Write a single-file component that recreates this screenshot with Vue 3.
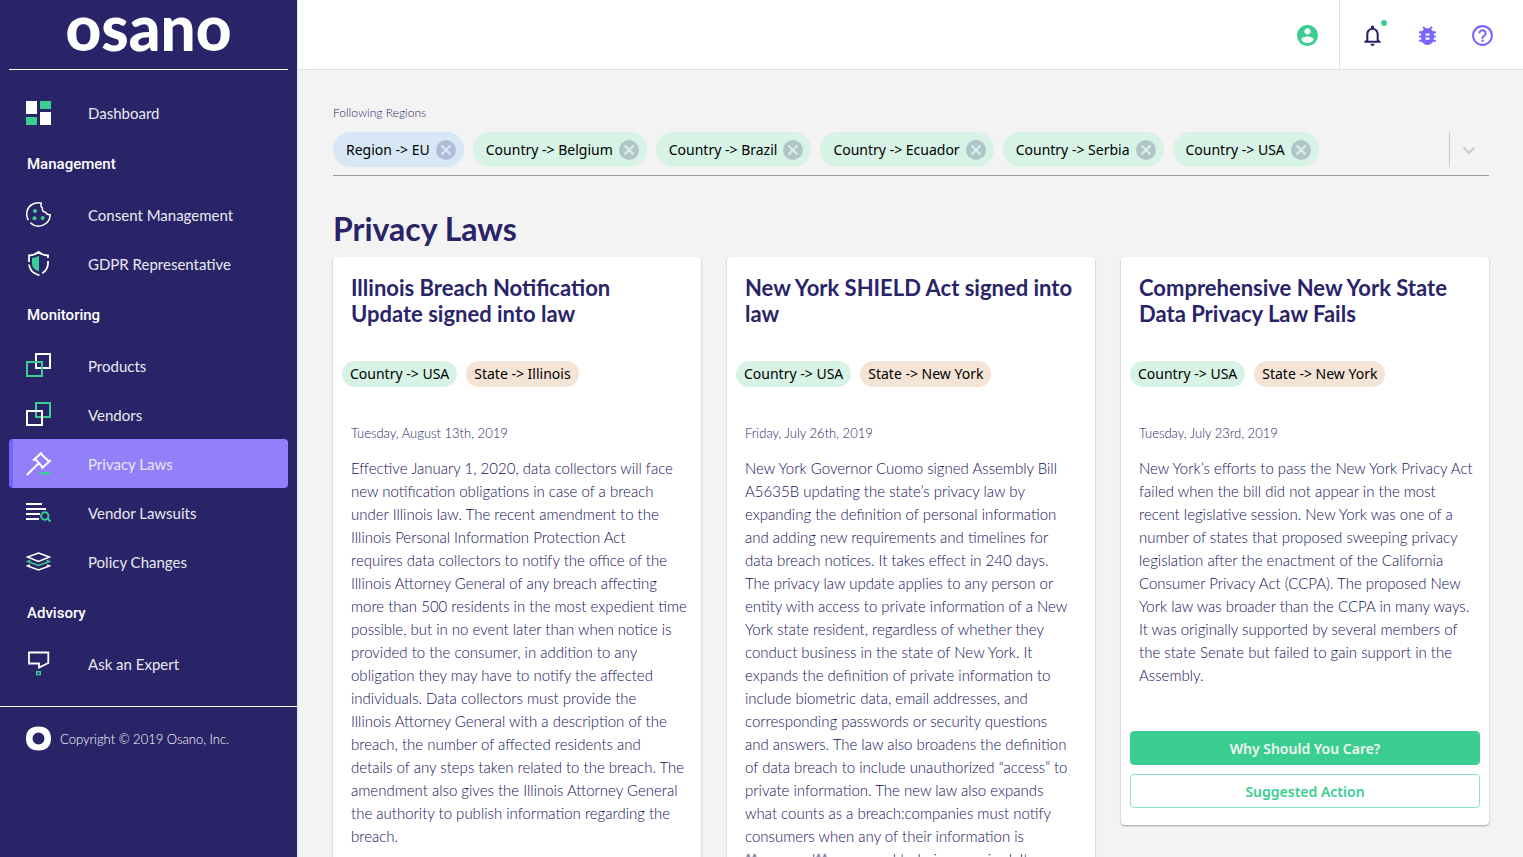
<script setup>
import { ref } from 'vue'

const groups = [
  { title: '', items: [{ label: 'Dashboard', icon: 'dashboard' }] },
  {
    title: 'Management',
    items: [
      { label: 'Consent Management', icon: 'cookie' },
      { label: 'GDPR Representative', icon: 'shield' },
    ],
  },
  {
    title: 'Monitoring',
    items: [
      { label: 'Products', icon: 'products' },
      { label: 'Vendors', icon: 'vendors' },
      { label: 'Privacy Laws', icon: 'gavel', active: true },
      { label: 'Vendor Lawsuits', icon: 'lawsuits' },
      { label: 'Policy Changes', icon: 'layers' },
    ],
  },
  { title: 'Advisory', items: [{ label: 'Ask an Expert', icon: 'ask' }] },
]

const regions = ref([
  { name: 'Region -> EU', tone: 'blue' },
  { name: 'Country -> Belgium', tone: 'green' },
  { name: 'Country -> Brazil', tone: 'green' },
  { name: 'Country -> Ecuador', tone: 'green' },
  { name: 'Country -> Serbia', tone: 'green' },
  { name: 'Country -> USA', tone: 'green' },
])

function removeRegion(index) {
  regions.value.splice(index, 1)
}

const laws = [
  {
    title: 'Illinois Breach Notification\nUpdate signed into law',
    tags: [
      { name: 'Country -> USA', tone: 'green' },
      { name: 'State -> Illinois', tone: 'orange' },
    ],
    date: 'Tuesday, August 13th, 2019',
    text: `Effective January 1, 2020, data collectors will face
new notification obligations in case of a breach
under Illinois law. The recent amendment to the
Illinois Personal Information Protection Act
requires data collectors to notify the office of the
Illinois Attorney General of any breach affecting
more than 500 residents in the most expedient time
possible, but in no event later than when notice is
provided to the consumer, in addition to any
obligation they may have to notify the affected
individuals. Data collectors must provide the
Illinois Attorney General with a description of the
breach, the number of affected residents and
details of any steps taken related to the breach. The
amendment also gives the Illinois Attorney General
the authority to publish information regarding the
breach.`,
  },
  {
    title: 'New York SHIELD Act signed into\nlaw',
    tags: [
      { name: 'Country -> USA', tone: 'green' },
      { name: 'State -> New York', tone: 'orange' },
    ],
    date: 'Friday, July 26th, 2019',
    text: `New York Governor Cuomo signed Assembly Bill
A5635B updating the state’s privacy law by
expanding the definition of personal information
and adding new requirements and timelines for
data breach notices. It takes effect in 240 days.
The privacy law update applies to any person or
entity with access to private information of a New
York state resident, regardless of whether they
conduct business in the state of New York. It
expands the definition of private information to
include biometric data, email addresses, and
corresponding passwords or security questions
and answers. The law also broadens the definition
of data breach to include unauthorized “access” to
private information. The new law also expands
what counts as a breach:companies must notify
consumers when any of their information is
**accessed** compared to being acquired. It`,
  },
  {
    title: 'Comprehensive New York State\nData Privacy Law Fails',
    tags: [
      { name: 'Country -> USA', tone: 'green' },
      { name: 'State -> New York', tone: 'orange' },
    ],
    date: 'Tuesday, July 23rd, 2019',
    text: `New York’s efforts to pass the New York Privacy Act
failed when the bill did not appear in the most
recent legislative session. New York was one of a
number of states that proposed sweeping privacy
legislation after the enactment of the California
Consumer Privacy Act (CCPA). The proposed New
York law was broader than the CCPA in many ways.
It was originally supported by several members of
the state Senate but failed to gain support in the
Assembly.`,
  },
]
</script>

<template>
  <div class="app">
    <aside class="sidebar">
      <a class="logo" href="#">osano</a>
      <nav class="nav">
        <section v-for="group in groups" :key="group.title">
          <h2 v-if="group.title" class="nav-title">{{ group.title }}</h2>
          <a
            v-for="item in group.items"
            :key="item.label"
            href="#"
            class="nav-item"
            :class="{ active: item.active }"
          >
            <svg class="nav-icon" viewBox="0 0 25 25" fill="none" aria-hidden="true">
              <g v-if="item.icon === 'dashboard'">
                <path fill="#fff" d="M0 1h11v13H0zM14 12h11v13H14z" />
                <path fill="#3acf91" d="M14 1h11v8H14zM0 17h11v8H0z" />
              </g>
              <g v-else-if="item.icon === 'cookie'">
                <path
                  stroke="#fff"
                  stroke-width="1.5"
                  d="M2.3 18.2C-.8 12.500 .8 5.500 6 2.500C8.800 .8 12.500 .5 15.300 1.300C14.500 3.500 15 5 16.500 6C16 8.500 17 10 19.500 10.200C20.500 12.200 22.300 13 24.200 12.800C24 17.500 21 21.800 16.500 23.400C12 24.900 7.500 23.800 4.400 20.800"
                />
                <g fill="#3acf91">
                  <circle cx="9" cy="9" r="2" /><circle cx="8.500" cy="16.200" r="2" />
                  <circle cx="16.700" cy="16" r="2" />
                </g>
              </g>
              <g v-else-if="item.icon === 'shield'">
                <path
                  stroke="#fff"
                  stroke-width="1.8"
                  d="M3 11V4.500C7 4.500 10 3 12.500 1C15 3 18 4.500 22 4.500V7M22 10V12C22 16.500 20 20 16.200 22.200M3 13.500C3.500 18.500 7 22.500 13.500 24.300"
                />
                <path fill="#3acf91" d="M13 4.500V20.500C8.500 19 6 16 6 12.500V7C8.500 6.800 11 6 13 4.500Z" />
              </g>
              <g v-else-if="item.icon === 'products' || item.icon === 'vendors'" stroke-width="2">
                <path :stroke="item.icon === 'products' ? '#fff' : '#3acf91'" d="M10 1H24V15H10z" />
                <path :stroke="item.icon === 'products' ? '#3acf91' : '#fff'" d="M1 9H16V23H1z" />
              </g>
              <g v-else-if="item.icon === 'gavel'" stroke="#fff" stroke-width="2">
                <path d="M.8 24L12.500 12.500M7 9.500L16 1.500M15.500 17.500L25 9" />
                <path d="M9 8L17 16.500M14 2L23.500 11" />
                <path stroke="none" fill="#3acf91" d="M14 21h10v2.500H14z" />
              </g>
              <g v-else-if="item.icon === 'lawsuits'">
                <path stroke="#fff" stroke-width="2" d="M0 4H16M0 9H20M0 14H14M0 19H13" />
                <circle cx="18.800" cy="16" r="3.700" stroke="#3acf91" stroke-width="2" />
                <path stroke="#3acf91" stroke-width="2" d="M21.500 18.500L24.500 21.500" />
              </g>
              <g v-else-if="item.icon === 'layers'" stroke-width="1.500">
                <path stroke="#fff" d="M12.500 4L23.500 8L12.500 12.500L1.500 8zM4 16L1.500 17L12.500 21L23.500 17L21 16" />
                <path stroke="#3acf91" d="M4.500 11.500L1.500 12.500L12.500 16.500L23.500 12.500L20.500 11.500" />
              </g>
              <g v-else>
                <path stroke="#fff" stroke-width="1.800" d="M3 1.500H22.300V12L13 16.500V12.500H3z" />
                <path stroke="#3acf91" stroke-width="1.400" d="M10.700 20.700H14.300V23.600H10.700z" />
              </g>
            </svg>
            <span>{{ item.label }}</span>
          </a>
        </section>
      </nav>
      <footer class="legal">
        <svg class="legal-mark" viewBox="0 0 25 25" aria-hidden="true">
          <path
            fill="#fff"
            fill-rule="evenodd"
            d="M12.500 .5C20.500 .5 25 4.500 25 12.500S20.500 24.500 12.500 24.500S0 20.500 0 12.500S4.500 .5 12.500 .5ZM12.500 6.500A6 6 0 1 0 12.500 18.500A6 6 0 1 0 12.500 6.500Z"
          />
        </svg>
        <span>Copyright © 2019 Osano, Inc.</span>
      </footer>
    </aside>

    <div class="page">
      <header class="topbar">
        <button class="icon-button account" type="button" aria-label="Account">
          <svg viewBox="0 0 24 24"><path fill="#3acf91" d="M12 2C6.480 2 2 6.480 2 12s4.480 10 10 10 10-4.480 10-10S17.520 2 12 2zm0 3c1.660 0 3 1.340 3 3s-1.340 3-3 3-3-1.340-3-3 1.340-3 3-3zm0 14.200c-2.500 0-4.710-1.280-6-3.220.03-1.990 4-3.080 6-3.080 1.990 0 5.970 1.090 6 3.080-1.290 1.940-3.500 3.220-6 3.220z" /></svg>
        </button>
        <div class="tools">
          <button class="icon-button" type="button" aria-label="Notifications">
            <svg viewBox="0 0 24 24"><path fill="#292468" d="M12 22c1.100 0 2-.9 2-2h-4c0 1.100.9 2 2 2zm6-6v-5c0-3.070-1.630-5.640-4.500-6.320V4c0-.83-.67-1.500-1.500-1.500s-1.500.67-1.500 1.500v.68C7.640 5.360 6 7.920 6 11v5l-2 2v1h16v-1l-2-2zm-2 1H8v-6c0-2.480 1.510-4.500 4-4.500s4 2.020 4 4.500v6z" /></svg>
            <span class="dot"></span>
          </button>
          <button class="icon-button" type="button" aria-label="Report a bug">
            <svg viewBox="0 0 24 24"><path fill="#7764fa" d="M20 8h-2.810c-.45-.78-1.070-1.450-1.820-1.960L17 4.410 15.590 3l-2.170 2.170C12.960 5.060 12.490 5 12 5c-.49 0-.96.06-1.410.17L8.410 3 7 4.410l1.620 1.630C7.880 6.550 7.260 7.220 6.810 8H4v2h2.090c-.05.33-.09.66-.09 1v1H4v2h2v1c0 .34.04.67.09 1H4v2h2.810c1.040 1.790 2.970 3 5.190 3s4.150-1.210 5.190-3H20v-2h-2.090c.05-.33.09-.66.09-1v-1h2v-2h-2v-1c0-.34-.04-.67-.09-1H20V8zm-6 8h-4v-2h4v2zm0-4h-4v-2h4v2z" /></svg>
          </button>
          <button class="icon-button" type="button" aria-label="Help">
            <svg viewBox="0 0 24 24"><path fill="#7764fa" d="M11 18h2v-2h-2v2zm1-16C6.480 2 2 6.480 2 12s4.480 10 10 10 10-4.480 10-10S17.520 2 12 2zm0 18c-4.410 0-8-3.590-8-8s3.590-8 8-8 8 3.590 8 8-3.590 8-8 8zm0-14c-2.210 0-4 1.790-4 4h2c0-1.100.9-2 2-2s2 .9 2 2c0 2-3 1.750-3 5h2c0-2.250 3-2.500 3-5 0-2.210-1.790-4-4-4z" /></svg>
          </button>
        </div>
      </header>

      <main class="content">
        <label class="field-label" for="regions">Following Regions</label>
        <div class="select">
          <span v-for="(region, index) in regions" :key="region.name" class="chip" :class="region.tone">
            {{ region.name }}
            <button type="button" class="chip-remove" :aria-label="'Remove ' + region.name" @click="removeRegion(index)">
              <svg viewBox="0 0 20 20" fill="none">
                <circle cx="10" cy="10" r="10" fill="#292468" fill-opacity=".22" />
                <path class="cross" stroke-width="2" d="M5.500 5.500L14.500 14.500M14.500 5.500L5.500 14.500" />
              </svg>
            </button>
          </span>
          <input id="regions" class="select-input" type="text" />
          <button type="button" class="select-toggle" aria-label="Show regions">
            <svg viewBox="0 0 20 20"><path fill="#ccc" d="M4.516 7.548c.436-.446 1.043-.481 1.576 0L10 11.295l3.908-3.747c.533-.481 1.141-.446 1.574 0 .436.445.408 1.197 0 1.615-.406.418-4.695 4.502-4.695 4.502a1.095 1.095 0 0 1-1.576 0S4.924 9.581 4.516 9.163c-.409-.418-.436-1.170 0-1.615z" /></svg>
          </button>
        </div>

        <h1 class="heading">Privacy Laws</h1>
        <div class="cards">
          <article v-for="law in laws" :key="law.title" class="card">
            <h2 class="card-title">{{ law.title }}</h2>
            <div class="tags">
              <span v-for="tag in law.tags" :key="tag.name" class="tag" :class="tag.tone">{{ tag.name }}</span>
            </div>
            <time class="date">{{ law.date }}</time>
            <p class="card-text">{{ law.text }}</p>
            <div class="actions">
              <button type="button" class="action primary">Why Should You Care?</button>
              <button type="button" class="action">Suggested Action</button>
            </div>
          </article>
        </div>
      </main>
    </div>
  </div>
</template>

<style>
body {
  overflow: hidden;
}
</style>

<style scoped>
.app {
  display: flex;
  height: 100vh;
  overflow: hidden;
  background: #f3f3f3;
  color: #292468;
  font-family: Lato, "Liberation Sans", sans-serif;
  font-weight: 300;
}
.app * {
  box-sizing: border-box;
}
button {
  padding: 0;
  border: 0;
  background: none;
  cursor: pointer;
}
svg {
  display: block;
}
.sidebar {
  flex: none;
  width: 298px;
  border-right: 1px solid #e4e4ec;
  background: #292468;
  color: #fff;
}
.logo {
  display: block;
  margin: 0 9px;
  padding-bottom: 15px;
  border-bottom: 1px solid #fff;
  color: #fff;
  font-size: 62px;
  font-weight: 900;
  line-height: 54px;
  text-align: center;
  text-decoration: none;
}
.nav {
  padding: 18px 9px;
}
.nav-title {
  height: 53px;
  margin: 0;
  padding-left: 18px;
  font: 500 15px/55px Roboto, sans-serif;
}
.nav-item {
  display: flex;
  align-items: center;
  gap: 37px;
  height: 49px;
  padding: 0 13px;
  border-left: 4px solid transparent;
  border-radius: 4px;
  color: #e9e9f0;
  font-size: 15px;
  font-weight: 400;
  text-decoration: none;
}
.nav-item.active {
  border-left-color: #7764fa;
  background: #9280fb;
}
.nav-icon {
  width: 25px;
  height: 25px;
}
.legal {
  display: flex;
  align-items: center;
  gap: 9px;
  height: 64px;
  padding: 0 26px;
  border-top: 1px solid #fff;
  font-size: 13px;
}
.legal-mark {
  width: 25px;
  height: 25px;
}
.page {
  flex: 1;
  min-width: 0;
}
.topbar {
  display: flex;
  justify-content: flex-end;
  height: 70px;
  border-bottom: 1px solid #e0e0e0;
  background: #fff;
}
.icon-button {
  position: relative;
  width: 25px;
  height: 25px;
}
.icon-button svg {
  width: 25px;
  height: 25px;
}
.account {
  margin: 23px 19px 0 0;
}
.tools {
  display: flex;
  gap: 30px;
  padding: 23px 28px 0 20px;
  border-left: 1px solid #e0e0e0;
}
.dot {
  position: absolute;
  top: -3px;
  right: -2px;
  width: 6px;
  height: 6px;
  border-radius: 50%;
  background: #3acf91;
}
.content {
  padding: 35px 34px 0 35px;
}
.field-label {
  display: block;
  font-size: 12px;
  line-height: 16px;
}
.select {
  display: flex;
  align-items: center;
  gap: 9px;
  margin-top: 11px;
  padding-bottom: 8px;
  border-bottom: 1px solid #999;
}
.chip {
  display: flex;
  align-items: center;
  gap: 6px;
  height: 35px;
  padding: 0 8px 0 13px;
  border-radius: 18px;
  color: #000;
  font: 14px "Noto Sans", sans-serif;
  white-space: nowrap;
}
.chip-remove,
.chip-remove svg {
  width: 20px;
  height: 20px;
}
.green {
  background: #d7f3e6;
}
.blue {
  background: #d7e7f5;
}
.orange {
  background: #f4e4d6;
}
.cross {
  stroke: #d7f3e6;
}
.blue .cross {
  stroke: #d7e7f5;
}
.select-input {
  flex: 1;
  min-width: 0;
  border: 0;
  outline: 0;
  background: none;
  font: 14px "Noto Sans", sans-serif;
}
.select-toggle {
  height: 35px;
  padding: 0 10px 0 9px;
  border-left: 1px solid #ccc;
}
.select-toggle svg {
  width: 20px;
  height: 20px;
}
.heading {
  margin: 33px 0 8px;
  font: 700 32px/40px Lato, sans-serif;
}
.cards {
  display: grid;
  grid-template-columns: repeat(3, 1fr);
  align-items: start;
  gap: 26px;
}
.card {
  padding: 18px 9px 17px;
  border-radius: 4px;
  background: #fff;
  box-shadow: 0 1px 2px rgba(0, 0, 0, 0.35);
}
.card-title {
  margin: 0;
  padding-left: 9px;
  font: 700 22px/26px Lato, sans-serif;
  white-space: pre-line;
}
.tags {
  display: flex;
  gap: 9px;
  margin: 34px 0 35px;
}
.tag {
  padding: 0 8px;
  border-radius: 13px;
  color: #000;
  font: 14px/26px "Noto Sans", sans-serif;
}
.date {
  display: block;
  padding: 0 9px;
  font-size: 13px;
  line-height: 22px;
}
.card-text {
  margin: 13px 0 44px;
  padding-left: 9px;
  color: #150f58;
  font-size: 15px;
  line-height: 23px;
  white-space: pre-line;
}
.actions {
  display: grid;
  gap: 9px;
}
.action {
  height: 34px;
  border: 1px solid #8be3bf;
  border-radius: 4px;
  color: #3acf91;
  font: 600 14px "Noto Sans", sans-serif;
}
.action.primary {
  border-color: #3acf91;
  background: #3acf91;
  color: #f3f3f3;
}
</style>
